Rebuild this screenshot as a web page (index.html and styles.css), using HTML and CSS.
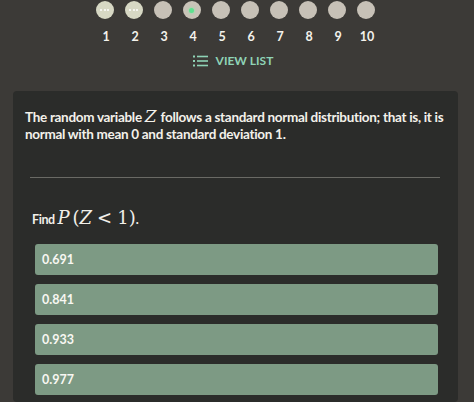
FILE: index.html
```html
<!DOCTYPE html>
<html>
<head>
<meta charset="utf-8">
<link rel="stylesheet" href="styles.css">
</head>
<body>
<div class="nav">
  <div class="dots">
    <div class="step"><span class="dot seen"><i></i><i></i><i></i></span><span class="num">1</span></div>
    <div class="step"><span class="dot seen"><i></i><i></i><i></i></span><span class="num">2</span></div>
    <div class="step"><span class="dot"></span><span class="num">3</span></div>
    <div class="step"><span class="dot current"><b></b></span><span class="num">4</span></div>
    <div class="step"><span class="dot"></span><span class="num">5</span></div>
    <div class="step"><span class="dot"></span><span class="num">6</span></div>
    <div class="step"><span class="dot"></span><span class="num">7</span></div>
    <div class="step"><span class="dot"></span><span class="num">8</span></div>
    <div class="step"><span class="dot"></span><span class="num">9</span></div>
    <div class="step"><span class="dot"></span><span class="num">10</span></div>
  </div>
  <div class="viewlist">
    <svg width="15" height="12" viewBox="0 0 15 12"><g fill="#8fd3b6"><rect x="0" y="0.5" width="2" height="2"/><rect x="0" y="5" width="2" height="2"/><rect x="0" y="9.5" width="2" height="2"/><rect x="4" y="0.7" width="11" height="1.6"/><rect x="4" y="5.2" width="11" height="1.6"/><rect x="4" y="9.7" width="11" height="1.6"/></g></svg>
    <span>VIEW LIST</span>
  </div>
</div>
<div class="card">
  <p class="stem">The random variable <span class="m mz">Z</span> follows a standard normal distribution; that is, it is normal with mean 0 and standard deviation 1.</p>
  <hr class="divider">
  <p class="find">Find <span class="math"><span class="m mp">P</span><span class="r">(</span><span class="m">Z</span><span class="r op">&lt;</span><span class="r">1)</span></span>.</p>
  <div class="options">
    <div class="opt">0.691</div>
    <div class="opt">0.841</div>
    <div class="opt">0.933</div>
    <div class="opt">0.977</div>
  </div>
</div>
</body>
</html>
```
FILE: styles.css
```css
html, body {
  margin: 0;
  padding: 0;
}
body {
  width: 474px;
  height: 402px;
  overflow: hidden;
  background: #3c3a37;
  font-family: Lato, "Open Sans", sans-serif;
  color: #f1efe9;
}
.nav {
  padding-top: 1px;
  display: flex;
  flex-direction: column;
  align-items: center;
}
.dots {
  display: flex;
  gap: 11px;
  margin-left: -4px;
}
.step {
  width: 18px;
  display: flex;
  flex-direction: column;
  align-items: center;
  gap: 11px;
}
.dot {
  width: 18px;
  height: 18px;
  border-radius: 50%;
  background: #c7c1b7;
  display: flex;
  align-items: center;
  justify-content: center;
  gap: 1.5px;
}
.dot.seen {
  background: #d7d8c4;
}
.dot.seen i {
  width: 2px;
  height: 2px;
  border-radius: 50%;
  background: #ffffff;
}
.dot.current {
  background: #c9c3b8;
}
.dot.current b {
  width: 5px;
  height: 5px;
  border-radius: 50%;
  background: #5fe08f;
  box-shadow: 0 0 3px #7cf0a4;
}
.num {
  font-weight: 700;
  font-size: 12.5px;
  line-height: 14px;
  color: #f4f2ec;
  white-space: nowrap;
  padding-left: 3px;
}
.viewlist {
  margin-top: 10px;
  margin-left: -8px;
  display: flex;
  align-items: center;
  gap: 8px;
  color: #8fd3b6;
  font-weight: 700;
  font-size: 12px;
  line-height: 14px;
}
.card {
  box-sizing: border-box;
  margin: 23px 16px 0 13px;
  background: #2b2c2a;
  border-radius: 4px;
  padding: 17px 8px 10px 12px;
  height: 311px;
}
.stem {
  margin: 0;
  font-size: 13.5px;
  line-height: 17px;
  font-weight: 700;
  letter-spacing: -0.3px;
  color: #f3f1ea;
}
.m {
  font-family: "DejaVu Serif", "Liberation Serif", serif;
  font-style: italic;
  font-weight: 400;
}
.mz {
  font-size: 17px;
  letter-spacing: 0;
  padding-right: 1px;
}
.divider {
  margin: 34px 10px 0 5px;
  border: 0;
  height: 1px;
  background: #6a6a65;
}
.find {
  margin: 28px 0 0 7px;
  font-size: 12.5px;
  line-height: 22px;
  font-weight: 700;
  letter-spacing: -0.4px;
}
.math {
  font-size: 18px;
  letter-spacing: 0;
}
.mp {
  padding-right: 3px;
}
.r {
  font-family: "DejaVu Serif", "Liberation Serif", serif;
  font-weight: 400;
}
.op {
  padding: 0 5px;
}
.options {
  margin: 13px 12px 0 10px;
  display: flex;
  flex-direction: column;
  gap: 9px;
}
.opt {
  height: 31px;
  background: #7d9a84;
  border-radius: 3px;
  display: flex;
  align-items: center;
  padding-left: 7px;
  font-size: 12.5px;
  font-weight: 700;
  color: #f8f7f2;
}
```
